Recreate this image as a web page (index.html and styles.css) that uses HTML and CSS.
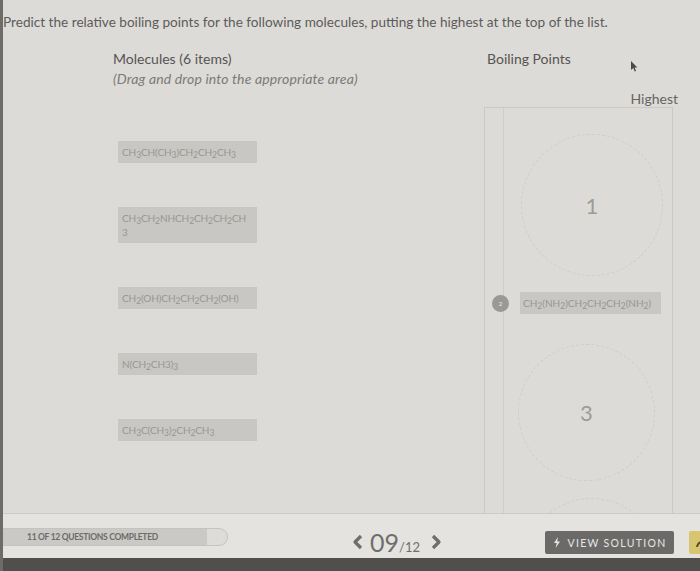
FILE: index.html
```html
<!DOCTYPE html>
<html lang="en">
<head>
<meta charset="utf-8">
<title>Boiling points</title>
<link rel="stylesheet" href="styles.css">
</head>
<body>
<div class="screen">
  <div class="main">
    <p class="prompt">Predict the relative boiling points for the following molecules, putting the highest at the top of the list.</p>
    <div class="columns">
      <section class="source">
        <h2 class="col-title">Molecules (6 items)</h2>
        <p class="hint">(Drag and drop into the appropriate area)</p>
        <ul class="chips">
          <li class="chip">CH<sub>3</sub>CH(CH<sub>3</sub>)CH<sub>2</sub>CH<sub>2</sub>CH<sub>3</sub></li>
          <li class="chip">CH<sub>3</sub>CH<sub>2</sub>NHCH<sub>2</sub>CH<sub>2</sub>CH<sub>2</sub>CH<br>3</li>
          <li class="chip">CH<sub>2</sub>(OH)CH<sub>2</sub>CH<sub>2</sub>CH<sub>2</sub>(OH)</li>
          <li class="chip">N(CH<sub>2</sub>CH3)<sub>3</sub></li>
          <li class="chip">CH<sub>3</sub>C(CH<sub>3</sub>)<sub>2</sub>CH<sub>2</sub>CH<sub>3</sub></li>
        </ul>
      </section>
      <section class="target">
        <div class="target-head">
          <h2 class="col-title">Boiling Points</h2>
          <svg class="cursor" width="8" height="12" viewBox="0 0 8 12"><path d="M1 1 L1 10 L3.2 8 L4.8 11.5 L6 11 L4.6 7.6 L7.4 7.4 Z" fill="#4a4a4a"/></svg>
        </div>
        <p class="highest">Highest</p>
        <div class="dropbox">
          <div class="slot circle">1</div>
          <div class="slot filled">
            <span class="badge">2</span>
            <span class="chip placed">CH<sub>2</sub>(NH<sub>2</sub>)CH<sub>2</sub>CH<sub>2</sub>CH<sub>2</sub>(NH<sub>2</sub>)</span>
          </div>
          <div class="slot circle third">3</div>
          <div class="slot circle fourth"></div>
        </div>
      </section>
    </div>
  </div>
  <footer class="footer">
    <div class="progress"><span class="progress-fill"></span><span class="progress-label">11 OF 12 QUESTIONS COMPLETED</span></div>
    <nav class="pager">
      <svg class="chev" width="12" height="16" viewBox="0 0 12 16"><path d="M9 2 L3 8 L9 14" fill="none" stroke="#6f6e6c" stroke-width="3.2" stroke-linejoin="round"/></svg>
      <span class="page-num">09</span><span class="page-total">/12</span>
      <svg class="chev next" width="12" height="16" viewBox="0 0 12 16"><path d="M3 2 L9 8 L3 14" fill="none" stroke="#6f6e6c" stroke-width="3.2" stroke-linejoin="round"/></svg>
    </nav>
    <button class="solution"><svg width="8" height="11" viewBox="0 0 8 11"><path d="M5 0 L1 6 L3.8 6 L2.6 11 L7 4.5 L4.2 4.5 Z" fill="#e6e6e4"/></svg>VIEW SOLUTION</button>
    <button class="next-btn"><svg width="14" height="10" viewBox="0 0 14 10"><path d="M1 9 C2 3 7 1 12 4 L9 6 C6 4 4 6 3 9 Z" fill="#5a4f2e"/></svg></button>
  </footer>
  <div class="bezel"></div>
</div>
</body>
</html>
```

FILE: styles.css
```css
* { box-sizing: border-box; }
html, body { margin: 0; padding: 0; }
body {
  width: 700px;
  height: 571px;
  overflow: hidden;
  font-family: Lato, "Open Sans", Arial, sans-serif;
  background: #dcdad6;
}
.screen {
  width: 700px;
  height: 571px;
  display: flex;
  flex-direction: column;
  border-left: 3px solid #6e6c6a;
  overflow: hidden;
}
.main {
  height: 513px;
  flex: none;
  display: flex;
  flex-direction: column;
  background: #dddbd7;
}
.prompt {
  margin: 14px 0 0 0;
  font-size: 13.6px;
  line-height: 17px;
  color: #5c5b5a;
  white-space: nowrap;
}
.columns {
  flex: 1;
  display: flex;
  margin-top: 19px;
}
.source {
  width: 371px;
  margin-left: 110px;
  flex: none;
}
.col-title {
  margin: 0;
  font-size: 14px;
  line-height: 17px;
  font-weight: 400;
  color: #555452;
}
.hint {
  margin: 3px 0 0 0;
  font-size: 14px;
  line-height: 17px;
  font-style: italic;
  color: #7b7a78;
  letter-spacing: 0.15px;
}
.chips {
  list-style: none;
  margin: 54px 0 0 5px;
  padding: 0;
  display: flex;
  flex-direction: column;
  gap: 44px;
}
.chip {
  width: 139px;
  padding: 4px 4px;
  background: #c9c7c3;
  color: #989693;
  font-size: 10px;
  line-height: 14px;
  white-space: nowrap;
  letter-spacing: -0.1px;
}
.chip sub {
  font-size: 0.85em;
  vertical-align: -0.25em;
  line-height: 0;
}
.target {
  width: 189px;
  flex: none;
  display: flex;
  flex-direction: column;
}
.target-head {
  display: flex;
  align-items: flex-start;
  margin-left: 3px;
}
.cursor {
  margin: 10px 0 0 59px;
}
.highest {
  margin: 18px -5px 0 0;
  text-align: right;
  font-size: 14px;
  line-height: 17px;
  color: #666563;
}
.dropbox {
  flex: 1;
  border: 1px solid #cbc9c5;
  border-bottom: none;
  background: linear-gradient(to right, transparent 18px, #cfcdc9 18px, #cfcdc9 19px, transparent 19px);
  display: flex;
  flex-direction: column;
  align-items: flex-start;
  padding-top: 26px;
  overflow: hidden;
}
.slot.circle {
  width: 142px;
  height: 142px;
  margin-left: 36px;
  border: 1px dashed #cfcdc9;
  border-radius: 50%;
  display: flex;
  align-items: center;
  justify-content: center;
  font-size: 22px;
  color: #9d9b98;
  flex: none;
}
.slot.filled {
  display: flex;
  align-items: center;
  margin-top: 16px;
  margin-left: 7px;
}
.badge {
  width: 17px;
  height: 17px;
  border-radius: 50%;
  background: #9b9996;
  color: #dedcd8;
  font-size: 6px;
  font-weight: 700;
  display: flex;
  align-items: center;
  justify-content: center;
}
.chip.placed {
  width: 141px;
  margin-left: 11px;
  padding: 4px 3px;
  letter-spacing: 0;
}
.slot.third { margin-top: 30px; margin-left: 33px; width: 137px; height: 137px; }
.slot.fourth { margin-top: 17px; margin-left: 38px; width: 137px; height: 137px; }
.footer {
  height: 45px;
  flex: none;
  border-top: 1px solid #cdcbc7;
  background: #e4e3df;
  display: flex;
  align-items: flex-start;
}
.footer > * { flex: none; }
.progress {
  position: relative;
  width: 225px;
  height: 18px;
  margin-top: 14px;
  border: 1px solid #c5c3bf;
  border-left: none;
  border-radius: 0 10px 10px 0;
  background: #dedcd8;
  overflow: hidden;
}
.progress-fill {
  position: absolute;
  left: 0; top: 0; bottom: 0;
  width: 204px;
  background: #cbc9c5;
}
.progress-label {
  position: relative;
  display: block;
  padding-left: 24px;
  font-size: 8.5px;
  line-height: 16px;
  font-weight: 700;
  color: #6c6b69;
  letter-spacing: -0.3px;
  white-space: nowrap;
}
.pager {
  margin: 15px 0 0 124px;
  display: flex;
  align-items: center;
  color: #6f6e6c;
  height: 26px;
}
.page-num {
  margin-left: 6px;
  font-size: 25px;
  line-height: 26px;
}
.page-total {
  font-size: 13px;
  line-height: 13px;
  margin-top: 10px;
}
.chev.next { margin-left: 10px; }
.solution {
  margin: 17px 0 0 103px;
  width: 129px;
  height: 23px;
  border: none;
  border-radius: 2px;
  background: #6b6a68;
  color: #e6e6e4;
  font-family: Lato, "Open Sans", Arial, sans-serif;
  font-size: 10.5px;
  letter-spacing: 1.3px;
  display: flex;
  align-items: center;
  justify-content: center;
  gap: 7px;
  padding: 0;
}
.next-btn {
  margin: 17px 0 0 15px;
  width: 30px;
  height: 23px;
  border: none;
  border-radius: 2px;
  background: #d8c56f;
  padding: 0 0 0 6px;
  display: flex;
  align-items: center;
}
.bezel {
  flex: 1;
  background: #514f4d;
}
```
